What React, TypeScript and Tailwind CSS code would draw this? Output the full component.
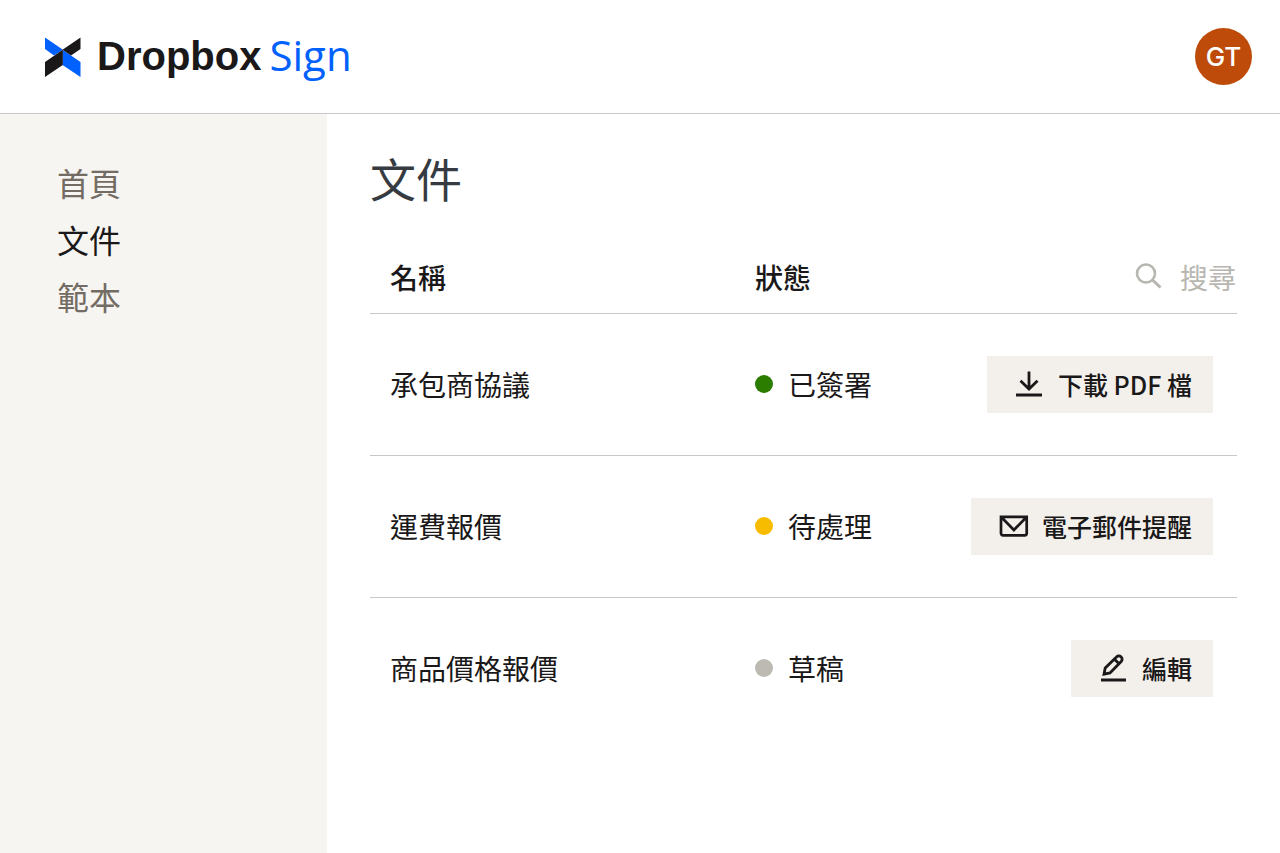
import type { ReactNode } from "react";
import { clsx } from "clsx";

const navItems = [
  { label: "首頁", href: "#home", active: false },
  { label: "文件", href: "#documents", active: true },
  { label: "範本", href: "#templates", active: false },
];

const documents = [
  { name: "承包商協議", status: "已簽署", dot: "bg-[#2b7d00]", action: "下載 PDF 檔", icon: <DownloadIcon /> },
  { name: "運費報價", status: "待處理", dot: "bg-[#f7bc00]", action: "電子郵件提醒", icon: <MailIcon /> },
  { name: "商品價格報價", status: "草稿", dot: "bg-[#bdb9b3]", action: "編輯", icon: <EditIcon /> },
];

export default function App() {
  return (
    <div className="flex min-h-screen flex-col bg-white font-['Noto_Sans_CJK_TC',sans-serif] text-[#1a1818]">
      <Header />
      <div className="flex grow">
        <Sidebar />
        <main className="grow px-[43px] pt-[31px]">
          <h1 className="text-[46px] leading-[64px] text-[#363b42]">文件</h1>
          <DocumentTable />
        </main>
      </div>
    </div>
  );
}

function Header() {
  return (
    <header className="flex h-[114px] items-center justify-between border-b border-[#c8c8c8] pr-7 pl-[45px]">
      <a href="#home" className="flex items-center">
        <svg viewBox="0 0 36 40" className="mr-4 h-10 w-9" aria-hidden="true">
          <path d="M0 0.5 18 12.8 9 18.5 0 12ZM17.5 12.8 35.5 25V40L17.5 28Z" fill="#0061fe" />
          <path d="M35.5 0.5V12L26 18.500 17.5 12.8ZM17.8 12.8V28L0 40V25Z" fill="#1a1818" />
        </svg>
        <span className="pb-0.5 font-['Liberation_Sans',sans-serif] text-[40px] leading-[56px] font-bold">Dropbox</span>
        <span className="ml-2 pb-1 font-['Open_Sans',sans-serif] text-[42px] leading-[56px] text-[#0061fe]">
          Sign
        </span>
      </a>
      <button className="size-[57px] rounded-full bg-[#be4b0a] font-['Inter',sans-serif] text-[26px] font-medium text-white">
        GT
      </button>
    </header>
  );
}

function Sidebar() {
  return (
    <nav className="w-[327px] shrink-0 bg-[#f7f5f2] pt-10 pl-[57px]">
      <ul>
        {navItems.map((item) => (
          <li key={item.label}>
            <a
              href={item.href}
              className={clsx("text-[32px] leading-[57px]", item.active ? "text-[#1a1818]" : "text-[#736c64]")}
            >
              {item.label}
            </a>
          </li>
        ))}
      </ul>
    </nav>
  );
}

function DocumentTable() {
  return (
    <table className="mt-7 w-full text-left text-[28px] leading-10">
      <thead>
        <tr className="h-[76px] border-b border-[#c8c8c8]">
          <th className="w-[385px] pt-1 pl-5 font-medium">名稱</th>
          <th className="pt-1 font-medium">狀態</th>
          <th className="pt-1">
            <label className="flex items-center justify-end gap-4 text-[#b8b6b0]">
              <SearchIcon />
              <input
                type="text"
                aria-label="搜尋"
                placeholder="搜尋"
                className="w-[57px] font-normal outline-none placeholder:text-[#b8b6b0]"
              />
            </label>
          </th>
        </tr>
      </thead>
      <tbody>
        {documents.map((doc) => (
          <tr key={doc.name} className="h-[142px] border-b border-[#c8c8c8] last:border-b-0">
            <td className="pl-5">{doc.name}</td>
            <td>
              <span className="flex items-center gap-[15px]">
                <span className={clsx("size-[18px] rounded-full", doc.dot)} />
                {doc.status}
              </span>
            </td>
            <td className="pr-6 text-right">
              <ActionButton icon={doc.icon} label={doc.action} />
            </td>
          </tr>
        ))}
      </tbody>
    </table>
  );
}

function ActionButton({ icon, label }: { icon: ReactNode; label: string }) {
  return (
    <button className="inline-flex h-[57px] items-center gap-[13px] bg-[#f3f0ec] pr-[21px] pl-7 align-middle text-[25px] font-medium">
      {icon}
      {label}
    </button>
  );
}

function SearchIcon() {
  return (
    <svg viewBox="0 0 30 30" className="size-[30px]" fill="none" stroke="currentColor" strokeWidth="2.6" aria-hidden="true">
      <circle cx="12" cy="11.5" r="9" />
      <path d="m18.5 18 8 7.5" strokeWidth="3" />
    </svg>
  );
}

function DownloadIcon() {
  return (
    <svg viewBox="0 0 30 30" className="size-[30px]" fill="none" stroke="currentColor" strokeWidth="2.8" aria-hidden="true">
      <path d="M14 2.5v18M5.5 11.8l8.5 8.2 8.5-8.2M1 26h26" />
    </svg>
  );
}

function MailIcon() {
  return (
    <svg viewBox="0 0 30 30" className="size-[30px]" fill="none" stroke="currentColor" strokeWidth="2.7" aria-hidden="true">
      <path d="M2 5.8h25.7v16.5a2 2 0 0 1-2 2H4a2 2 0 0 1-2-2ZM2.7 6.5l12.2 12.5 12.2-12.5" />
    </svg>
  );
}

function EditIcon() {
  return (
    <svg viewBox="0 0 30 30" className="size-[30px]" fill="none" stroke="currentColor" strokeWidth="2.8" aria-hidden="true">
      <path d="M5 21.200 6.200 15 17.500 4a3.200 3.200 0 0 1 4.700 4.600L11 19.900ZM15.500 6.200l4.600 4.600M2 27h25" />
    </svg>
  );
}
